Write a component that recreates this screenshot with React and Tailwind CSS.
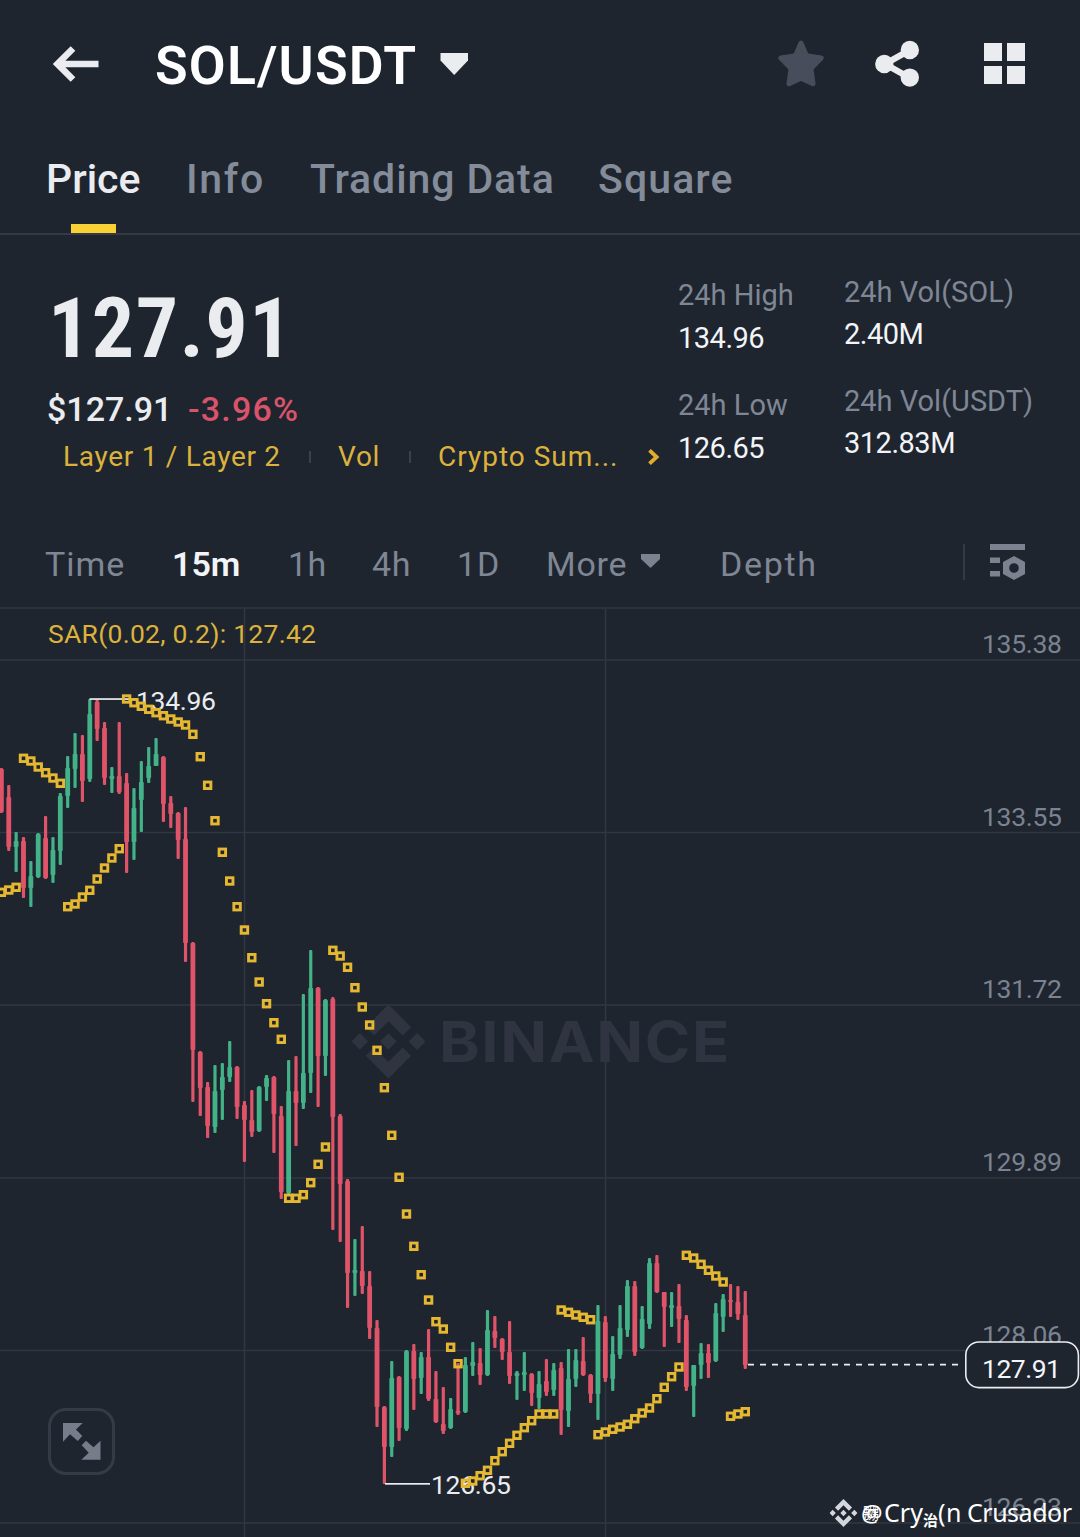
import { SiBinance } from 'react-icons/si'

const UP = '#43b288'
const DOWN = '#e0546a'
const SAR = '#e6b831'

// Candle slots are evenly spaced along the x axis
const slotX = (i) => 1.4 + i * 7.365

// [direction, high, low, body top, body bottom]
const CANDLES = [
  ['d', 768, 813, 769, 812], ['d', 785, 851, 797, 847], ['u', 832, 872, 841, 847], ['d', 837, 898, 841, 888],
  ['u', 861, 907, 876, 888], ['u', 833, 878, 834, 877], ['d', 816, 879, 838, 878], ['u', 837, 883, 850, 875],
  ['u', 793, 865, 796, 851], ['u', 756, 808, 768, 796], ['u', 733, 788, 754, 769], ['d', 735, 802, 754, 781],
  ['u', 699, 782, 714, 779], ['d', 699, 741, 702, 729], ['d', 722, 785, 728, 778], ['u', 767, 793, 776, 779],
  ['d', 722, 794, 776, 792], ['d', 773, 873, 783, 842], ['u', 788, 860, 808, 842], ['u', 761, 832, 782, 800],
  ['u', 747, 783, 766, 778], ['u', 738, 766, 754, 766], ['d', 756, 822, 757, 804], ['d', 796, 828, 803, 814],
  ['d', 812, 859, 813, 840], ['d', 807, 962, 839, 943], ['d', 942, 1102, 943, 1050], ['d', 1051, 1116, 1052, 1088],
  ['d', 1082, 1138, 1087, 1126], ['u', 1065, 1133, 1091, 1127], ['u', 1063, 1120, 1077, 1090], ['u', 1041, 1082, 1067, 1077],
  ['d', 1066, 1119, 1067, 1107], ['d', 1101, 1162, 1105, 1120], ['d', 1090, 1137, 1120, 1132], ['u', 1086, 1132, 1087, 1131],
  ['u', 1075, 1101, 1078, 1087], ['d', 1076, 1153, 1077, 1114], ['d', 1106, 1199, 1116, 1192], ['u', 1060, 1195, 1091, 1193],
  ['d', 1056, 1146, 1091, 1103], ['u', 994, 1109, 1073, 1103], ['u', 950, 1093, 988, 1073], ['d', 987, 1107, 988, 1056],
  ['u', 999, 1076, 1000, 1056], ['d', 997, 1230, 999, 1117], ['d', 1114, 1242, 1116, 1184], ['d', 1179, 1308, 1181, 1273],
  ['u', 1239, 1296, 1270, 1273], ['d', 1226, 1294, 1271, 1286], ['d', 1271, 1339, 1286, 1328], ['d', 1320, 1427, 1328, 1407],
  ['d', 1406, 1484, 1407, 1447], ['u', 1361, 1457, 1378, 1447], ['d', 1376, 1441, 1377, 1428], ['u', 1350, 1431, 1351, 1429],
  ['d', 1344, 1410, 1351, 1379], ['u', 1352, 1394, 1357, 1378], ['d', 1329, 1401, 1357, 1399], ['d', 1371, 1423, 1399, 1422],
  ['d', 1387, 1434, 1424, 1431], ['u', 1398, 1429, 1409, 1428], ['d', 1363, 1415, 1411, 1413], ['u', 1357, 1413, 1365, 1412],
  ['u', 1342, 1376, 1362, 1366], ['d', 1348, 1385, 1363, 1375], ['u', 1310, 1376, 1330, 1375], ['d', 1316, 1348, 1331, 1338],
  ['d', 1338, 1360, 1339, 1352], ['d', 1321, 1384, 1352, 1376], ['u', 1371, 1400, 1373, 1376], ['u', 1352, 1391, 1372, 1375],
  ['d', 1373, 1406, 1374, 1393], ['u', 1371, 1409, 1384, 1398], ['d', 1359, 1396, 1381, 1392], ['u', 1363, 1396, 1370, 1390],
  ['d', 1362, 1435, 1368, 1410], ['u', 1349, 1427, 1379, 1411], ['u', 1349, 1387, 1360, 1379], ['d', 1337, 1376, 1361, 1375],
  ['d', 1374, 1403, 1375, 1394], ['u', 1305, 1420, 1321, 1394], ['d', 1316, 1382, 1322, 1378], ['u', 1336, 1391, 1354, 1379],
  ['u', 1305, 1359, 1328, 1355], ['u', 1280, 1337, 1286, 1330], ['d', 1281, 1356, 1286, 1352], ['u', 1306, 1349, 1319, 1348],
  ['u', 1258, 1329, 1263, 1324], ['d', 1255, 1293, 1263, 1292], ['d', 1292, 1347, 1292, 1307], ['u', 1292, 1327, 1305, 1308],
  ['d', 1284, 1343, 1306, 1319], ['d', 1315, 1391, 1320, 1387], ['u', 1365, 1417, 1365, 1386], ['u', 1343, 1379, 1353, 1365],
  ['d', 1344, 1378, 1353, 1363], ['u', 1303, 1362, 1313, 1361], ['u', 1294, 1332, 1299, 1317], ['d', 1284, 1317, 1300, 1302],
  ['d', 1286, 1320, 1302, 1314], ['d', 1291, 1369, 1315, 1365],
]

// One parabolic SAR marker per candle
const SAR_POINTS = [
  892.3, 890, 887.3,
  758.3, 761, 767, 772.7, 778, 783.3,
  906.7, 904, 897, 890.3, 879, 868, 858, 848.7,
  699, 702.7, 706.3, 709.3, 712.7, 715.7, 719, 722, 725, 734.3, 756.7, 785.3, 820.7, 852.3, 881, 906.7, 930, 957.7, 982, 1003.7, 1022.7, 1039.3,
  1198.3, 1198.3, 1194.7, 1182.7, 1164.3, 1147,
  950.3, 956, 967.3, 987.7, 1007, 1025, 1050.3, 1087.7, 1135.3, 1177.3, 1214, 1246.3, 1274.7, 1300, 1321.7, 1329, 1347.3, 1363.7,
  1483.3, 1481, 1475.7, 1470.3, 1460.7, 1451.7, 1443.3, 1435.3, 1427.7, 1420.7, 1414, 1414, 1414,
  1310, 1312.3, 1315, 1317.3, 1319.7,
  1434.7, 1432, 1429.3, 1427, 1424.3, 1418.7, 1413, 1408, 1398.7, 1387.3, 1376.7, 1367,
  1255.3, 1258, 1264.3, 1270.3, 1276, 1282,
  1416.3, 1414, 1411.7,
]

const GRID = [
  { y: 660, label: '135.38' },
  { y: 832.5, label: '133.55' },
  { y: 1005, label: '131.72' },
  { y: 1178, label: '129.89' },
  { y: 1350.5, label: '128.06' },
  { y: 1523, label: '126.23' },
]

function Header() {
  return (
    <header className="flex h-[130px] items-center pl-[53px] pr-[55px]">
      <svg className="-mt-[3px] h-9 w-[47px] shrink-0" viewBox="0 0 47 36" fill="none" stroke="#eaecf0" strokeWidth="6.6">
        <path d="M4.5 18H45.5M20 2.5L4.5 18L20 33.5" />
      </svg>
      <h1 className="ml-[55px] w-[285px] whitespace-nowrap pt-[2px] text-[53.5px] font-semibold tracking-[1.2px] text-white">
        SOL/USDT
      </h1>
      <svg className="-mt-[3px] h-[22px] w-7" viewBox="0 0 28 22" fill="#eaecf0">
        <path d="M0.5 0H28V7.5L14.2 22L0.5 7.5Z" />
      </svg>
      <div className="-mt-[3px] ml-auto flex items-center">
        <svg className="h-[47px] w-[46px]" viewBox="0 0 46 47" fill="#474d5a" stroke="#474d5a" strokeWidth="5" strokeLinejoin="round">
          <path d="M23 3L28.4 15.8L43.2 18L33 28.6L35 43.8L23 38.2L11 43.8L13 28.6L2.8 18L17.6 15.8Z" />
        </svg>
        <svg className="ml-[51px] h-[48px] w-[46px]" viewBox="0 0 46 48" fill="#eaecf0">
          <path d="M10 24L35 10M10 24L35 38" stroke="#eaecf0" strokeWidth="6.4" />
          <circle cx="9.3" cy="24" r="9.2" />
          <circle cx="34.8" cy="10" r="9.2" />
          <circle cx="34.8" cy="37.6" r="9.2" />
        </svg>
        <div className="ml-[63px] grid grid-cols-2 gap-[5px]">
          <span className="h-[18px] w-[18px] bg-[#eaecf0]" />
          <span className="h-[18px] w-[18px] bg-[#eaecf0]" />
          <span className="h-[18px] w-[18px] bg-[#eaecf0]" />
          <span className="h-[18px] w-[18px] bg-[#eaecf0]" />
        </div>
      </div>
    </header>
  )
}

function Tabs() {
  return (
    <nav className="grid h-[105px] grid-cols-[140px_124px_288px_1fr] whitespace-nowrap border-b-2 border-[#333a45] pl-[46px] text-[41px] font-medium leading-[98px] text-[#848b99]">
      <div className="relative text-[#eaecf0]">
        Price
        <span className="absolute bottom-0 left-[25px] h-[9px] w-[45px] bg-[#fad134]" />
      </div>
      <div className="tracking-[1.7px]">Info</div>
      <div className="tracking-[0.9px]">Trading Data</div>
      <div className="tracking-[1.1px]">Square</div>
    </nav>
  )
}

function Stat({ label, value, row }) {
  return (
    <div className={row}>
      <div className="text-[29px] text-[#7f8694]">{label}</div>
      <div className="text-[29px] tracking-[-0.5px] text-[#f2f4f7]">{value}</div>
    </div>
  )
}

function Ticker() {
  return (
    <section className="flex h-[286px] whitespace-nowrap">
      <div className="w-[678px] shrink-0 pl-[47px] pt-[44px]">
        <div className="ml-[1px] h-[99px] text-[84px] font-bold leading-[100px] tracking-[1.4px] text-[#eaecf0] font-stretch-85%">
          127.91
        </div>
        <div className="flex h-[63px] items-center text-[34px] font-medium">
          <span className="w-[141px] text-[#eaecf0]">$127.91</span>
          <span className="tracking-[1.2px] text-[#d9546a]">-3.96%</span>
        </div>
        <div className="flex h-8 items-center pl-4 text-[28px] text-[#dcb23c]">
          <span className="w-[246px] tracking-[0.7px]">Layer 1 / Layer 2</span>
          <span className="h-3 w-[2px] bg-[#3a404c]" />
          <span className="w-[98px] pl-[27px] tracking-[0.7px]">Vol</span>
          <span className="h-3 w-[2px] bg-[#3a404c]" />
          <span className="w-[237px] pl-[27px] tracking-[1px]">Crypto Sum...</span>
          <svg className="-mt-[1px] h-4 w-3 shrink-0" viewBox="0 0 12 16" fill="none" stroke="#e0ac2b" strokeWidth="3.8">
            <path d="M1.5 1.3L8.6 8L1.5 14.7" />
          </svg>
        </div>
      </div>
      <div className="w-[166px] pt-[39px] leading-[43px]">
        <Stat label="24h High" value="134.96" row="mb-6" />
        <Stat label="24h Low" value="126.65" row="" />
      </div>
      <div className="pt-[36px] leading-[42px]">
        <Stat label="24h Vol(SOL)" value="2.40M" row="mb-[25px]" />
        <Stat label="24h Vol(USDT)" value="312.83M" row="" />
      </div>
    </section>
  )
}

function Intervals() {
  return (
    <div className="flex h-[88px] items-center whitespace-nowrap border-b-2 border-[#2c323d] pl-[45px] text-[34px] text-[#7f8694]">
      <span className="w-[127px] tracking-[1px]">Time</span>
      <span className="w-[116px] font-semibold text-[#f2f4f7]">15m</span>
      <span className="w-[84px] tracking-[0.3px]">1h</span>
      <span className="w-[85px] tracking-[0.6px]">4h</span>
      <span className="w-[89px] tracking-[0.8px]">1D</span>
      <span className="w-[95px] tracking-[0.7px]">More</span>
      <svg className="-mt-[6px] h-[14px] w-[19px]" viewBox="0 0 19 14" fill="#7b8290">
        <path d="M0 0H19V5L9.5 14L0 5Z" />
      </svg>
      <span className="ml-[60px] w-[243px] tracking-[1.7px]">Depth</span>
      <span className="-mt-[4px] h-9 w-[2px] bg-[#333a45]" />
      <svg className="-mt-[4px] ml-[25px] h-9 w-[35px]" viewBox="0 0 35 36" fill="#7b8290">
        <path d="M0 0H35V6H0ZM0 13.5H10V19H0ZM0 27H10V32.5H0Z" />
        <path
          fillRule="evenodd"
          d="M24 12L35 18V30L24 36L13 30V18ZM24 19.2A4.8 4.8 0 1 0 24 28.8A4.8 4.8 0 1 0 24 19.2Z"
        />
      </svg>
    </div>
  )
}

function Candle({ candle, x }) {
  const [dir, high, low, top, bottom] = candle
  const color = dir === 'u' ? UP : DOWN
  return (
    <g fill={color}>
      <rect x={x - 1.6} y={high} width="3.2" height={low - high} rx="1" />
      <rect x={x - 2.4} y={top} width="4.8" height={Math.max(bottom - top, 2)} rx="0.8" />
    </g>
  )
}

function Chart() {
  return (
    <div className="relative h-[928px]">
      <svg className="block h-[928px] w-[1080px]" viewBox="0 609 1080 928" fontSize="26.5">
        <g stroke="#303742" strokeWidth="1.6">
          {GRID.map((g) => (
            <line key={g.y} x1="0" x2="1080" y1={g.y} y2={g.y} />
          ))}
          <line x1="244.5" x2="244.5" y1="609" y2="1537" />
          <line x1="605.5" x2="605.5" y1="609" y2="1537" />
        </g>

        {/* Brand watermark */}
        <g fill="#2f3440">
          <SiBinance x="351.5" y="1004.5" size={74} color="#2f3440" />
          <text
            x="439"
            y="1062"
            fontSize="56.5"
            fontWeight="700"
            textLength="292"
            lengthAdjust="spacingAndGlyphs"
            className="font-['Inter',sans-serif] tracking-[1.5px]"
          >
            BINANCE
          </text>
        </g>

        <g fill="#7b8290">
          {GRID.map((g) => (
            <text key={g.label} x="982" y={g.y - 6.8} textLength="80">{g.label}</text>
          ))}
        </g>

        <text x="48" y="642.6" fill="#dcb23c" textLength="268">SAR(0.02, 0.2): 127.42</text>

        {CANDLES.map((c, i) => (
          <Candle key={i} candle={c} x={slotX(i)} />
        ))}

        {/* High and low callouts */}
        <g fill="#eaecf0">
          <rect x="89.5" y="698.2" width="45" height="1.7" />
          <text x="136" y="709.5" textLength="80">134.96</text>
          <rect x="385" y="1483" width="45" height="1.7" />
          <text x="431" y="1493.7" textLength="80">126.65</text>
        </g>

        <g fill="none" stroke={SAR} strokeWidth="2.9">
          {SAR_POINTS.map((y, i) => (
            <rect key={i} x={slotX(i) - 3.25} y={y - 3.25} width="6.5" height="6.5" />
          ))}
        </g>

        {/* Last price */}
        <line x1="748" x2="961" y1="1364.7" y2="1364.7" stroke="#eaecf0" strokeWidth="1.7" strokeDasharray="6 6" />
        <rect x="965.8" y="1342" width="112.6" height="45.6" rx="13" fill="#1e252f" stroke="#eaecf0" strokeWidth="1.6" />
        <text x="982" y="1378" fill="#f4f5f8" textLength="79">127.91</text>

        {/* Author stamp */}
        <g fill="#ffffff" fontSize="25" className="font-['Noto_Sans','Noto_Sans_CJK_SC',sans-serif]">
          <SiBinance x="829.5" y="1499" size={28} color="#d3d6db" />
          <text x="861" y="1522" fontSize="24">@</text>
          <text x="863" y="1519" fontSize="16">嬲</text>
          <text x="884" y="1522" textLength="39">Cry</text>
          <text x="923" y="1526" fontSize="15" fontWeight="700">治</text>
          <text x="938" y="1522">(</text>
          <text x="946" y="1522">n</text>
          <text x="967" y="1522" textLength="105">Crusador</text>
        </g>
      </svg>

      <button className="absolute left-[48px] top-[799px] flex h-[67px] w-[67px] items-center justify-center rounded-[18px] border-3 border-[#343a46]">
        <svg className="h-[37px] w-[38px]" viewBox="0 0 38 37" fill="#757c8a">
          <path d="M0 0H19.7L13 6.5L19.3 13L14.8 18L7 11.3L0 18.7Z" />
          <path d="M37.5 36.7V17.7L30.5 24.3L23 17.7L18.7 22.3L25.7 29.7L18.3 36.7Z" />
        </svg>
      </button>
    </div>
  )
}

export default function App() {
  return (
    <main className="h-[1537px] w-[1080px] overflow-hidden bg-[#1e252f] font-['Roboto',sans-serif]">
      <Header />
      <Tabs />
      <Ticker />
      <Intervals />
      <Chart />
    </main>
  )
}
